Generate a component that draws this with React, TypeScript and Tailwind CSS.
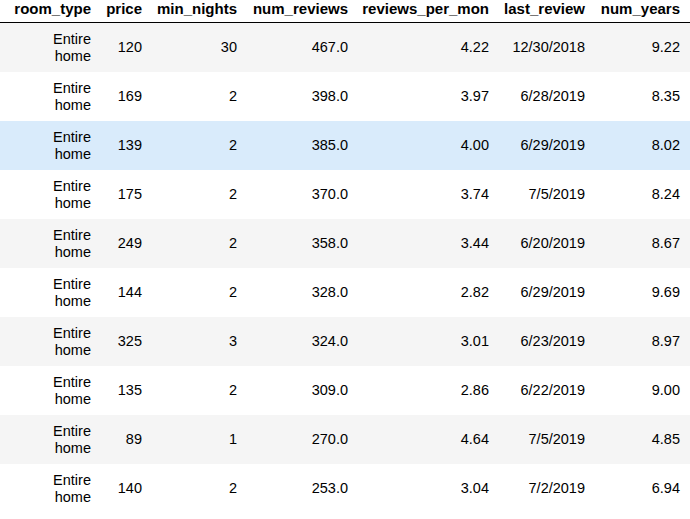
import React from "react";

type Row = {
  price: number;
  minNights: number;
  numReviews: string;
  perMonth: string;
  lastReview: string;
  numYears: string;
};

const rows: Row[] = [
  { price: 120, minNights: 30, numReviews: "467.0", perMonth: "4.22", lastReview: "12/30/2018", numYears: "9.22" },
  { price: 169, minNights: 2, numReviews: "398.0", perMonth: "3.97", lastReview: "6/28/2019", numYears: "8.35" },
  { price: 139, minNights: 2, numReviews: "385.0", perMonth: "4.00", lastReview: "6/29/2019", numYears: "8.02" },
  { price: 175, minNights: 2, numReviews: "370.0", perMonth: "3.74", lastReview: "7/5/2019", numYears: "8.24" },
  { price: 249, minNights: 2, numReviews: "358.0", perMonth: "3.44", lastReview: "6/20/2019", numYears: "8.67" },
  { price: 144, minNights: 2, numReviews: "328.0", perMonth: "2.82", lastReview: "6/29/2019", numYears: "9.69" },
  { price: 325, minNights: 3, numReviews: "324.0", perMonth: "3.01", lastReview: "6/23/2019", numYears: "8.97" },
  { price: 135, minNights: 2, numReviews: "309.0", perMonth: "2.86", lastReview: "6/22/2019", numYears: "9.00" },
  { price: 89, minNights: 1, numReviews: "270.0", perMonth: "4.64", lastReview: "7/5/2019", numYears: "4.85" },
  { price: 140, minNights: 2, numReviews: "253.0", perMonth: "3.04", lastReview: "7/2/2019", numYears: "6.94" },
];

const HOVER_ROW = 2;

export default function App() {
  return (
    <div className="w-[690px] h-[519px] overflow-hidden bg-white text-black font-['Liberation_Sans',Arial,sans-serif] text-[14.5px]">
      <table className="w-full table-fixed border-collapse">
        <colgroup>
          <col className="w-[98px]" />
          <col className="w-[51px]" />
          <col className="w-[95px]" />
          <col className="w-[111px]" />
          <col className="w-[141px]" />
          <col className="w-[96px]" />
          <col className="w-[98px]" />
        </colgroup>
        <thead>
          <tr className="h-[22px] border-b border-black text-right text-[15px] font-bold leading-[17px]">
            <th className="px-[7px] pb-[5px] align-bottom">room_type</th>
            <th className="px-[7px] pb-[5px] align-bottom">price</th>
            <th className="px-[7px] pb-[5px] align-bottom">min_nights</th>
            <th className="px-[7px] pb-[5px] align-bottom">num_reviews</th>
            <th className="px-[7px] pb-[5px] align-bottom">reviews_per_mon</th>
            <th className="px-[7px] pb-[5px] align-bottom">last_review</th>
            <th className="pl-[7px] pr-[10px] pb-[5px] align-bottom">num_years</th>
          </tr>
        </thead>
        <tbody>
          {rows.map((r, i) => (
            <tr
              key={i}
              className={
                i === HOVER_ROW
                  ? "h-[49px] bg-[#d9ebfb] text-right leading-[17px]"
                  : i % 2 === 0
                  ? "h-[49px] bg-[#f5f5f5] text-right leading-[17px]"
                  : "h-[49px] bg-white text-right leading-[17px]"
              }
            >
              <td className="px-[7px] pt-px align-middle">
                Entire
                <br />
                home
              </td>
              <td className="px-[7px] pt-px align-middle">{r.price}</td>
              <td className="px-[7px] pt-px align-middle">{r.minNights}</td>
              <td className="px-[7px] pt-px align-middle">{r.numReviews}</td>
              <td className="px-[7px] pt-px align-middle">{r.perMonth}</td>
              <td className="px-[7px] pt-px align-middle">{r.lastReview}</td>
              <td className="pl-[7px] pr-[10px] pt-px align-middle">{r.numYears}</td>
            </tr>
          ))}
        </tbody>
      </table>
    </div>
  );
}
